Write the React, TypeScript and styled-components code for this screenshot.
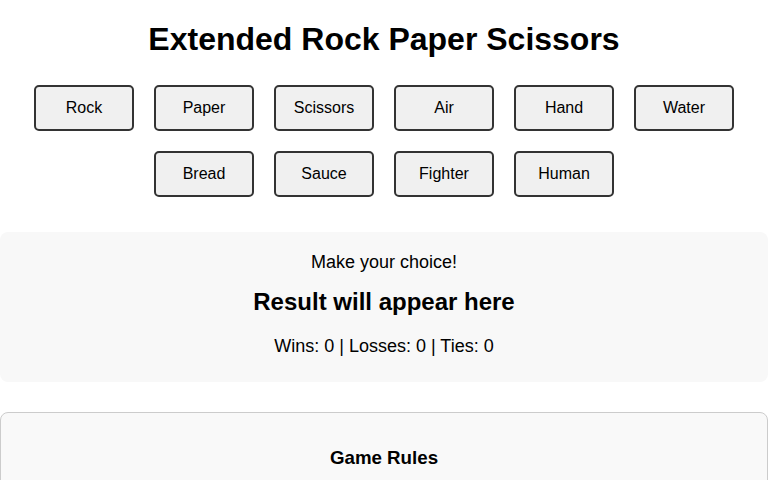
import React from "react";
import styled, { createGlobalStyle } from "styled-components";

const Global = createGlobalStyle`
  body {
    margin: 0;
    background: #ffffff;
    font-family: "Liberation Sans", Arial, sans-serif;
    color: #000;
  }
`;

const Page = styled.div`
  display: flex;
  flex-direction: column;
`;

const Title = styled.h1`
  margin: 21px 0 17px;
  font-size: 32px;
  line-height: 37px;
  font-weight: bold;
  text-align: center;
`;

const Choices = styled.div`
  display: flex;
  flex-wrap: wrap;
  justify-content: center;
  width: 720px;
  margin: 0 auto;
`;

const ChoiceButton = styled.button`
  width: 100px;
  height: 46px;
  margin: 10px;
  padding: 0;
  border: 2px solid #333;
  border-radius: 5px;
  background: #f0f0f0;
  font-family: "Liberation Sans", Arial, sans-serif;
  font-size: 16px;
  color: #000;
  cursor: pointer;
`;

const ResultPanel = styled.div`
  margin-top: 25px;
  padding: 20px 20px 25px;
  background: #f8f8f8;
  border-radius: 8px;
  text-align: center;
  display: flex;
  flex-direction: column;
`;

const Choice = styled.div`
  font-size: 18px;
  line-height: 21px;
`;

const Result = styled.div`
  margin-top: 15px;
  font-size: 24px;
  line-height: 28px;
  font-weight: bold;
`;

const Score = styled.div`
  margin-top: 20px;
  font-size: 18px;
  line-height: 21px;
`;

const RulesPanel = styled.div`
  margin-top: 30px;
  padding: 15px;
  border: 1px solid #ccc;
  border-radius: 8px;
  background: #f9f9f9;
  text-align: center;
`;

const RulesTitle = styled.h3`
  margin: 18.72px 0;
  font-size: 18.72px;
  font-weight: bold;
`;

const options = [
  "Rock",
  "Paper",
  "Scissors",
  "Air",
  "Hand",
  "Water",
  "Bread",
  "Sauce",
  "Fighter",
  "Human",
];

export default function App() {
  return (
    <Page>
      <Global />
      <Title>Extended Rock Paper Scissors</Title>
      <Choices>
        {options.map((o) => (
          <ChoiceButton key={o}>{o}</ChoiceButton>
        ))}
      </Choices>
      <ResultPanel>
        <Choice>Make your choice!</Choice>
        <Result>Result will appear here</Result>
        <Score>Wins: 0 | Losses: 0 | Ties: 0</Score>
      </ResultPanel>
      <RulesPanel>
        <RulesTitle>Game Rules</RulesTitle>
      </RulesPanel>
    </Page>
  );
}
